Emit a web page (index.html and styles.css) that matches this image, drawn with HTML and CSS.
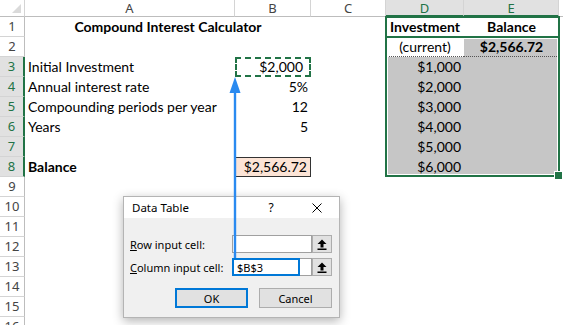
FILE: index.html
```html
<!DOCTYPE html>
<html lang="en">
<head>
    <meta charset="UTF-8">
    <title>Compound Interest Calculator - Data Table</title>
    <link rel="stylesheet" href="styles.css">
</head>
<body>
    <div class="sheet">
        <div class="grid">
            <div class="corner"></div>
            <div class="ch">A</div>
            <div class="ch">B</div>
            <div class="ch">C</div>
            <div class="ch on">D</div>
            <div class="ch on">E</div>
            <div class="ch last"></div>

            <div class="rh">1</div>
            <div class="c title">Compound Interest Calculator</div>
            <div class="c"></div>
            <div class="c mid bold">Investment</div>
            <div class="c mid bold">Balance</div>
            <div class="c"></div>

            <div class="rh">2</div>
            <div class="c"></div>
            <div class="c"></div>
            <div class="c"></div>
            <div class="c mid cur">(current)</div>
            <div class="c mid bold fill cur">$2,566.72</div>
            <div class="c"></div>

            <div class="rh on">3</div>
            <div class="c">Initial Investment</div>
            <div class="c num copy">$2,000</div>
            <div class="c"></div>
            <div class="c num fill">$1,000</div>
            <div class="c fill"></div>
            <div class="c"></div>

            <div class="rh on">4</div>
            <div class="c">Annual interest rate</div>
            <div class="c num">5%</div>
            <div class="c"></div>
            <div class="c num fill">$2,000</div>
            <div class="c fill"></div>
            <div class="c"></div>

            <div class="rh on">5</div>
            <div class="c">Compounding periods per year</div>
            <div class="c num">12</div>
            <div class="c"></div>
            <div class="c num fill">$3,000</div>
            <div class="c fill"></div>
            <div class="c"></div>

            <div class="rh on">6</div>
            <div class="c">Years</div>
            <div class="c num">5</div>
            <div class="c"></div>
            <div class="c num fill">$4,000</div>
            <div class="c fill"></div>
            <div class="c"></div>

            <div class="rh on">7</div>
            <div class="c"></div>
            <div class="c"></div>
            <div class="c"></div>
            <div class="c num fill">$5,000</div>
            <div class="c fill"></div>
            <div class="c"></div>

            <div class="rh on">8</div>
            <div class="c bold">Balance</div>
            <div class="c num result">$2,566.72</div>
            <div class="c"></div>
            <div class="c num fill">$6,000</div>
            <div class="c fill"></div>
            <div class="c"></div>

            <div class="rh">9</div><div class="blank"></div>
            <div class="rh">10</div><div class="blank"></div>
            <div class="rh">11</div><div class="blank"></div>
            <div class="rh">12</div><div class="blank"></div>
            <div class="rh">13</div><div class="blank"></div>
            <div class="rh">14</div><div class="blank"></div>
            <div class="rh">15</div><div class="blank"></div>
            <div class="rh">16</div><div class="blank"></div>

            <!-- table frame D1:E8 and selected range D2:E8 -->
            <div class="frame"></div>
            <div class="selection"></div>
        </div>

        <div class="dialog">
            <div class="dlg-title">
                <span class="dlg-name">Data Table</span>
                <span class="dlg-help">?</span>
                <span class="dlg-close">
                    <svg width="10" height="10" viewBox="0 0 10 10"><path d="M0.5 0.5 L9.5 9.5 M9.5 0.5 L0.5 9.5" stroke="#000" stroke-width="1"/></svg>
                </span>
            </div>
            <div class="dlg-body">
                <div class="dlg-row">
                    <label class="dlg-label"><u>R</u>ow input cell:</label>
                    <div class="ref"></div>
                    <div class="pick">
                        <svg width="10" height="11" viewBox="0 0 10 11"><path d="M5 0.5 L9.5 5 H6.5 V8.5 H3.5 V5 H0.5 Z" fill="#000"/><rect x="0.5" y="9.5" width="9" height="1.5" fill="#000"/></svg>
                    </div>
                </div>
                <div class="dlg-row">
                    <label class="dlg-label"><u>C</u>olumn input cell:</label>
                    <div class="ref"><span class="ref-text">$B$3</span></div>
                    <div class="pick">
                        <svg width="10" height="11" viewBox="0 0 10 11"><path d="M5 0.5 L9.5 5 H6.5 V8.5 H3.5 V5 H0.5 Z" fill="#000"/><rect x="0.5" y="9.5" width="9" height="1.5" fill="#000"/></svg>
                    </div>
                </div>
                <div class="dlg-actions">
                    <button class="btn ok">OK</button>
                    <button class="btn">Cancel</button>
                </div>
            </div>
        </div>

        <!-- arrow from B3 down to the column input box -->
        <svg class="pointer" width="563" height="325" viewBox="0 0 563 325">
            <path d="M235 77 L240.5 93 L229.5 93 Z" fill="#2a8af0"/>
            <line x1="235" y1="92" x2="235" y2="258" stroke="#2a8af0" stroke-width="2.4"/>
        </svg>
    </div>
</body>
</html>
```

FILE: styles.css
```css
* {
    box-sizing: border-box;
    margin: 0;
    padding: 0;
}

body {
    font-family: Lato, 'Liberation Sans', sans-serif;
    color: #000;
    background-color: #fff;
    width: 563px;
    height: 325px;
    overflow: hidden;
}

.sheet {
    position: relative;
    height: 325px;
}

.grid {
    position: relative;
    display: grid;
    grid-template-columns: 25px 210px 76px 75px 78px 95px 1fr;
    grid-template-rows: 17px repeat(16, 20px);
    font-size: 14px;
}

/* headers */
.corner {
    position: relative;
    border-right: 1px solid #d4d4d4;
    border-bottom: 1px solid #bdbdbd;
}

.corner::after {
    content: "";
    position: absolute;
    right: 3px;
    bottom: 3px;
    border-style: solid;
    border-width: 0 0 9px 9px;
    border-color: transparent transparent #dadada transparent;
}

.ch {
    text-align: center;
    font-family: 'Noto Sans', sans-serif;
    font-size: 13px;
    line-height: 16px;
    color: #444;
    border-right: 1px solid #d4d4d4;
    border-bottom: 1px solid #bdbdbd;
}

.ch.on {
    background-color: #e1e1e1;
    color: #217346;
    border-bottom: 2px solid #217346;
}

.ch.last {
    border-right: none;
}

.rh {
    text-align: center;
    font-family: 'Noto Sans', sans-serif;
    font-size: 13px;
    line-height: 19px;
    color: #444;
    border-right: 1px solid #bdbdbd;
    border-bottom: 1px solid #d4d4d4;
}

.rh.on {
    background-color: #e1e1e1;
    color: #217346;
    border-right: 2px solid #217346;
}

/* cells */
.c {
    padding: 0 3px;
    line-height: 20px;
    white-space: nowrap;
}

.c.num {
    text-align: right;
}

.c.mid {
    text-align: center;
}

.c.bold {
    font-weight: bold;
}

.title {
    grid-column: span 2;
    text-align: center;
    font-weight: bold;
}

.fill {
    background-color: #c6c6c6;
}

.cur {
    border-bottom: 1px dotted #555;
    line-height: 19px;
}

.copy {
    border: 2px dashed #217346;
    line-height: 16px;
    padding-right: 6px;
}

.result {
    background-color: #fce4d6;
    border: 1px solid #333;
    line-height: 18px;
}

.blank {
    grid-column: span 6;
}

.frame {
    position: absolute;
    grid-column: 5 / 7;
    grid-row: 2 / 10;
    inset: -1px -1px 0 -1px;
    border: 2px solid #217346;
}

.selection {
    position: absolute;
    grid-column: 5 / 7;
    grid-row: 3 / 10;
    inset: -1px -1px 0 -1px;
    border: 2px solid #217346;
    box-shadow: inset 0 0 0 1px #fff;
}

.selection::after {
    content: "";
    position: absolute;
    right: -5px;
    bottom: -5px;
    width: 7px;
    height: 7px;
    background-color: #217346;
    border: 1px solid #fff;
}

/* Data Table dialog */
.dialog {
    position: absolute;
    left: 123px;
    top: 196px;
    width: 217px;
    height: 122px;
    background-color: #f0f0f0;
    border: 1px solid #b4b4b4;
    box-shadow: 0 3px 10px rgba(0, 0, 0, 0.3);
    font-family: 'Noto Sans', sans-serif;
    font-size: 11px;
}

.dlg-title {
    height: 21px;
    background-color: #fff;
    display: flex;
    align-items: center;
    padding-left: 8px;
    font-size: 11.5px;
}

.dlg-name {
    flex: 1;
}

.dlg-help {
    width: 20px;
    text-align: center;
    font-size: 12px;
}

.dlg-close {
    width: 20px;
    margin-left: 26px;
    margin-right: 12px;
    display: flex;
    justify-content: center;
}

.dlg-body {
    display: flex;
    flex-direction: column;
    gap: 3px;
    padding: 16px 7px 0 6px;
}

.dlg-row {
    display: flex;
    align-items: center;
    height: 20px;
}

.dlg-label {
    width: 102px;
}

.ref {
    width: 80px;
    height: 18px;
    border: 1px solid #a0a0a0;
    background-color: #fff;
    display: flex;
}

.ref-text {
    width: 68px;
    margin: -1px 0 -1px -1px;
    border: 2px solid #0078d7;
    padding-left: 3px;
    line-height: 16px;
    background-color: #fff;
}

.pick {
    width: 20px;
    height: 18px;
    border: 1px solid #adadad;
    background-color: #e1e1e1;
    display: flex;
    align-items: center;
    justify-content: center;
}

.dlg-actions {
    display: flex;
    justify-content: flex-end;
    gap: 11px;
    margin-top: 8px;
}

.btn {
    width: 73px;
    height: 20px;
    font: inherit;
    color: #000;
    background-color: #e1e1e1;
    border: 1px solid #adadad;
}

.btn.ok {
    border: 2px solid #0078d7;
}

.pointer {
    position: absolute;
    left: 0;
    top: 0;
    pointer-events: none;
}
```
